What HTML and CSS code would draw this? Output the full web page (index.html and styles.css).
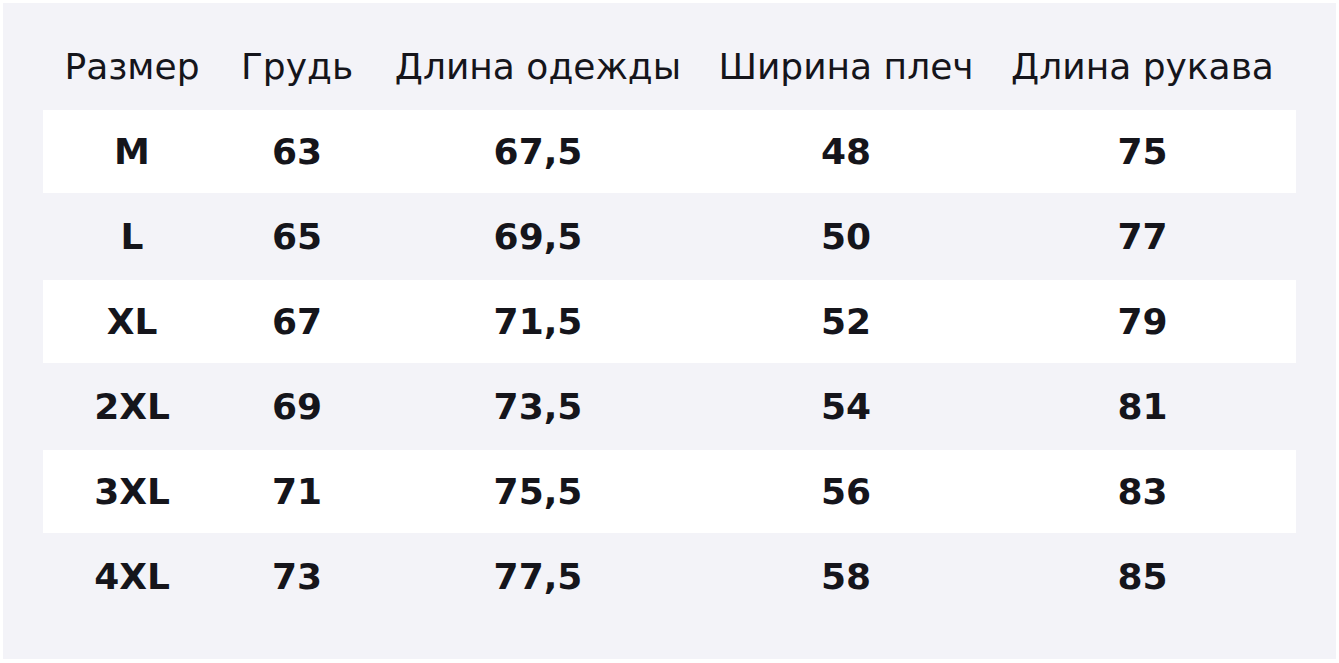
FILE: index.html
```html
<!DOCTYPE html>
<html lang="ru">
<head>
<meta charset="utf-8">
<title>Размеры</title>
<link rel="stylesheet" href="styles.css">
</head>
<body>
<div class="panel">
  <div class="table">
    <div class="row head">
      <div class="cell">Размер</div>
      <div class="cell">Грудь</div>
      <div class="cell">Длина одежды</div>
      <div class="cell">Ширина плеч</div>
      <div class="cell">Длина рукава</div>
    </div>
    <div class="row white">
      <div class="cell">M</div><div class="cell">63</div><div class="cell">67,5</div><div class="cell">48</div><div class="cell">75</div>
    </div>
    <div class="row">
      <div class="cell">L</div><div class="cell">65</div><div class="cell">69,5</div><div class="cell">50</div><div class="cell">77</div>
    </div>
    <div class="row white">
      <div class="cell">XL</div><div class="cell">67</div><div class="cell">71,5</div><div class="cell">52</div><div class="cell">79</div>
    </div>
    <div class="row">
      <div class="cell">2XL</div><div class="cell">69</div><div class="cell">73,5</div><div class="cell">54</div><div class="cell">81</div>
    </div>
    <div class="row white">
      <div class="cell">3XL</div><div class="cell">71</div><div class="cell">75,5</div><div class="cell">56</div><div class="cell">83</div>
    </div>
    <div class="row">
      <div class="cell">4XL</div><div class="cell">73</div><div class="cell">77,5</div><div class="cell">58</div><div class="cell">85</div>
    </div>
  </div>
</div>
</body>
</html>
```
FILE: styles.css
```css
html, body {
  margin: 0;
  padding: 0;
  background: #ffffff;
}
body {
  padding: 3px 3px 4px 3px;
  font-family: "DejaVu Sans", sans-serif;
  color: #15151b;
}
.panel {
  background: #f3f3f8;
  height: 656px;
  box-sizing: border-box;
  padding: 22px 40px 0 40px;
}
.table {
  display: flex;
  flex-direction: column;
  gap: 2px;
}
.row {
  display: grid;
  grid-template-columns: 178px 152px 330px 286px 307px;
  height: 83px;
  align-items: center;
  font-size: 36px;
  font-weight: bold;
}
.row.head {
  font-weight: normal;
  font-size: 36px;
}
.row.white {
  background: #ffffff;
}
.cell {
  text-align: center;
  white-space: nowrap;
}
```
